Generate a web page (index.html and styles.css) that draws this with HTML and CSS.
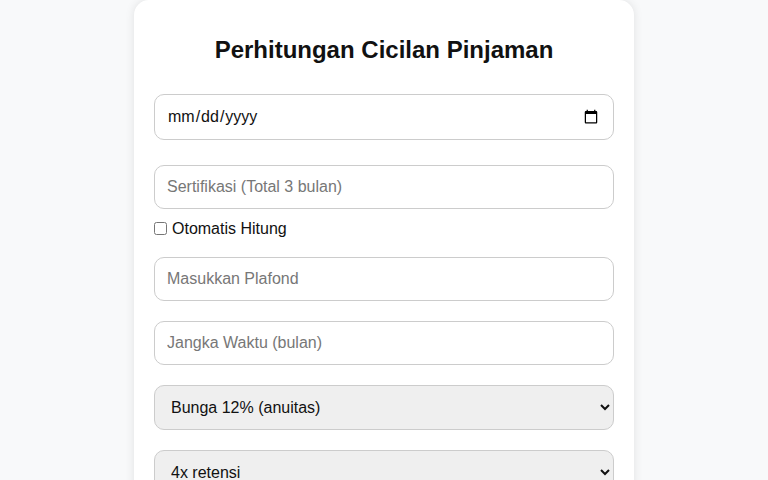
FILE: index.html
```html
<!DOCTYPE html>
<html lang="id">
<head>
<meta charset="utf-8">
<title>Perhitungan Cicilan Pinjaman</title>
<link rel="stylesheet" href="styles.css">
</head>
<body>
<div class="card">
  <h2 class="title">Perhitungan Cicilan Pinjaman</h2>
  <input class="field field-date" type="date">
  <input class="field field-cert" type="text" placeholder="Sertifikasi (Total 3 bulan)">
  <label class="check-row"><input class="check" type="checkbox">Otomatis Hitung</label>
  <input class="field" type="text" placeholder="Masukkan Plafond">
  <input class="field" type="text" placeholder="Jangka Waktu (bulan)">
  <select class="field select">
    <option>Bunga 12% (anuitas)</option>
    <option>Bunga 10% (flat)</option>
  </select>
  <select class="field select">
    <option>4x retensi</option>
    <option>3x retensi</option>
  </select>
  <button class="btn" type="button">Hitung</button>
</div>
</body>
</html>
```
FILE: styles.css
```css
html, body {
  margin: 0;
  padding: 0;
}
body {
  background: #f8f9fa;
  font-family: "Liberation Sans", Arial, sans-serif;
  color: #222;
}
.card {
  box-sizing: border-box;
  width: 500px;
  margin: 0 auto;
  padding: 20px;
  background: #fff;
  border-radius: 15px;
  box-shadow: 0 0 10px rgba(0, 0, 0, 0.1);
}
.title {
  margin: 16px 0 30px;
  font-size: 24px;
  line-height: 28px;
  font-weight: bold;
  text-align: center;
  color: #111;
}
.field {
  display: block;
  box-sizing: border-box;
  width: 100%;
  margin: 0 0 20px;
  padding: 12px;
  border: 1px solid #ccc;
  border-radius: 10px;
  font-family: "Liberation Sans", Arial, sans-serif;
  font-size: 16px;
  color: #111;
  background: #fff;
}
.field::placeholder {
  color: #777;
}
.field-date {
  margin-bottom: 25px;
}
.field-cert {
  margin-bottom: 10px;
}
.check-row {
  display: flex;
  align-items: center;
  height: 19px;
  margin: 0 0 19px;
  font-size: 16px;
  color: #111;
}
.check {
  margin: 0 5px 0 0;
  width: 13px;
  height: 13px;
}
.select {
  background-color: #efefef;
  height: 45px;
}
.btn {
  display: block;
  width: 100%;
  padding: 12px;
  border: 0;
  border-radius: 10px;
  background: #28a745;
  color: #fff;
  font-size: 16px;
}
```
